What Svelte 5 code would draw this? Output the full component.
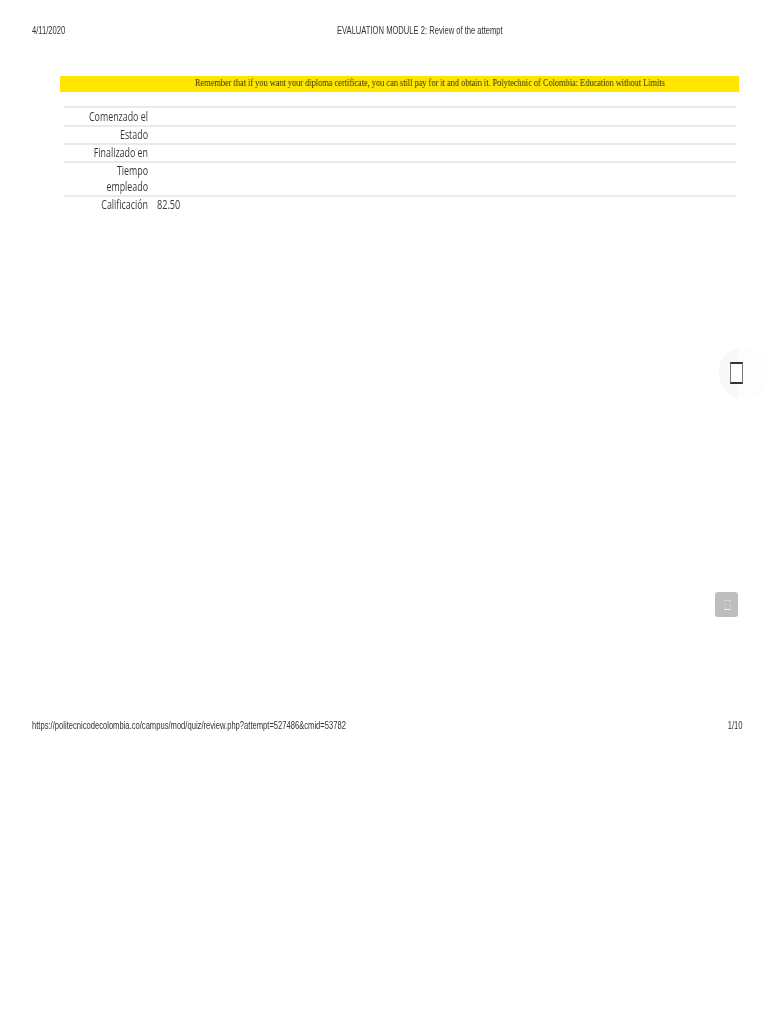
<script>
  const rows = [
    { label: "Comenzado el", value: "" },
    { label: "Estado", value: "" },
    { label: "Finalizado en", value: "" },
    { label: "Tiempo empleado", value: "" },
    { label: "Calificación", value: "82.50" }
  ];
</script>

<div class="sheet">
  <header class="print-head">
    <span class="squeezed">4/11/2020</span>
    <span class="squeezed title">EVALUATION MODULE 2: Review of the attempt</span>
  </header>

  <main class="content">
    <div class="notice">
      <span class="notice-text">Remember that if you want your diploma certificate, you can still pay for it and obtain it. Polytechnic of Colombia: Education without Limits</span>
    </div>

    <table class="summary">
      <tbody>
        {#each rows as row}
          <tr>
            <th><span class="cell-label">{row.label}</span></th>
            <td><span class="cell-value">{row.value}</span></td>
          </tr>
        {/each}
      </tbody>
    </table>
  </main>

  <footer class="print-foot">
    <span class="squeezed">https://politecnicodecolombia.co/campus/mod/quiz/review.php?attempt=527486&amp;cmid=53782</span>
    <span class="squeezed page-no">1/10</span>
  </footer>

  <!-- floating widgets left on the printed page -->
  <div class="side-tab">
    <div class="side-box"></div>
  </div>
  <div class="up-btn">
    <div class="up-glyph"></div>
  </div>
</div>

<style>
  :global(body) {
    background: #fff;
  }

  .sheet {
    position: relative;
    width: 768px;
    height: 1024px;
    overflow: hidden;
    background: #fff;
    display: flex;
    flex-direction: column;
  }

  /* the print is soft, text sits a bit blurred */
  .print-head,
  .print-foot,
  .content {
    filter: blur(0.3px);
  }

  .print-head,
  .print-foot {
    display: flex;
    justify-content: space-between;
    font-family: "Liberation Sans", sans-serif;
    font-size: 10px;
    line-height: 12px;
    color: #333;
  }

  .squeezed {
    display: inline-block;
    white-space: nowrap;
    transform: scaleX(0.76);
    transform-origin: left center;
  }

  .page-no {
    transform-origin: right center;
  }

  .print-head {
    box-sizing: border-box;
    padding: 25px 32px 0;
    height: 38px;
  }

  .title {
    position: absolute;
    left: 337px;
  }

  .content {
    height: 662px;
    padding-top: 38px;
    box-sizing: border-box;
  }

  .notice {
    margin: 0 29px 0 60px;
    height: 16px;
    padding-left: 135px;
    background: #ffe600;
    font-family: "Liberation Serif", serif;
    font-size: 9.5px;
    line-height: 15px;
    color: #33310c;
    white-space: nowrap;
  }

  .notice-text {
    display: inline-block;
    transform: scaleX(0.874);
    transform-origin: left center;
    will-change: transform;
  }

  .summary {
    margin: 14px 32px 0 64px;
    width: 672px;
    table-layout: fixed;
    border-collapse: separate;
    border-spacing: 0;
    font-family: "Open Sans", sans-serif;
    font-size: 12px;
    line-height: 16px;
    color: #3a3a3a;
  }

  .summary th,
  .summary td {
    border-top: 2px solid #e8eaed;
    padding: 0;
    vertical-align: top;
  }

  .summary tr:first-child th,
  .summary tr:first-child td {
    padding-top: 1px;
  }

  .summary th {
    width: 84px;
    text-align: right;
    font-weight: 400;
  }

  .cell-label {
    display: block;
    transform: scaleX(0.74);
    transform-origin: right center;
  }

  .summary td {
    padding-left: 9px;
  }

  .cell-value {
    display: block;
    transform: scaleX(0.76);
    transform-origin: left center;
  }

  .print-foot {
    padding: 20px 26px 0 32px;
  }

  .side-tab {
    position: absolute;
    left: 719px;
    top: 347px;
    width: 49px;
    height: 52px;
    border-radius: 26px;
    background: linear-gradient(90deg, #f8f8f8 0 19px, #fdfdfd 19px);
  }

  .side-box {
    position: absolute;
    left: 11px;
    top: 15px;
    width: 11px;
    height: 18px;
    border: 1px solid #777;
    border-top: 2px solid #333;
    border-bottom: 2px solid #333;
    background: #fff;
  }

  .up-btn {
    position: absolute;
    left: 715px;
    top: 592px;
    width: 23px;
    height: 25px;
    border-radius: 3px;
    background: #bdbdbd;
  }

  .up-glyph {
    position: absolute;
    left: 9px;
    top: 8px;
    width: 5px;
    height: 8px;
    border: 1px solid #c9c9c9;
    border-top-color: #d8d8d8;
    border-bottom-color: #f2f2f2;
  }
</style>
